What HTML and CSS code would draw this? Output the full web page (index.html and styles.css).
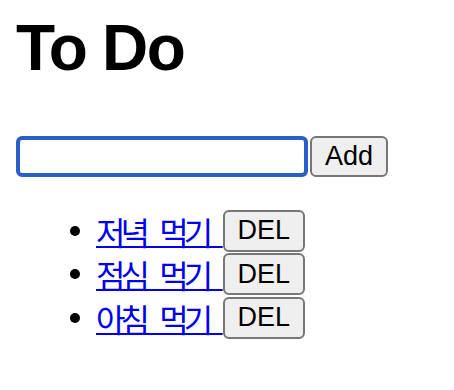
FILE: index.html
```html
<!DOCTYPE html>
<html lang="ko">
<head>
<meta charset="utf-8">
<title>To Do</title>
<link rel="stylesheet" href="styles.css">
</head>
<body>
<h1 class="title">To Do</h1>
<form class="add-form">
  <input class="add-input" type="text">
  <button class="btn btn-add" type="button">Add</button>
</form>
<ul class="todo-list">
  <li class="todo-item"><span class="dot"></span><a class="todo-link" href="#">저녁 먹기 </a><button class="btn btn-del" type="button">DEL</button></li>
  <li class="todo-item"><span class="dot"></span><a class="todo-link" href="#">점심 먹기 </a><button class="btn btn-del" type="button">DEL</button></li>
  <li class="todo-item"><span class="dot"></span><a class="todo-link" href="#">아침 먹기 </a><button class="btn btn-del" type="button">DEL</button></li>
</ul>
</body>
</html>
```
FILE: styles.css
```css
html, body {
  margin: 0;
  padding: 0;
  background: #ffffff;
}
body {
  padding: 0 16px;
  font-family: "Liberation Sans", Arial, "Noto Sans CJK KR", sans-serif;
  color: #000;
}
.title {
  margin: 11px 0 51px;
  font-size: 64px;
  font-weight: 700;
  line-height: 74px;
  height: 74px;
  letter-spacing: -1.7px;
}
.add-form {
  display: flex;
  align-items: flex-start;
  gap: 2px;
  margin: 0;
}
.add-input {
  box-sizing: border-box;
  width: 292px;
  height: 41px;
  margin: 0;
  border: 4px solid #2a5fc6;
  border-radius: 6px;
  outline: none;
  background: #fff;
  font-size: 26.67px;
}
.btn {
  box-sizing: border-box;
  margin: 0;
  padding: 0;
  background: #efefef;
  border: 2px solid #767676;
  border-radius: 6px;
  font-family: "Liberation Sans", Arial, sans-serif;
  font-size: 27px;
  color: #000;
  line-height: 1;
}
.btn-add {
  width: 78px;
  height: 41px;
}
.todo-list {
  list-style: none;
  margin: 32px 0 0;
  padding: 0 0 0 54px;
}
.todo-item {
  display: flex;
  align-items: center;
  height: 43.5px;
}
.dot {
  width: 10px;
  height: 10px;
  border-radius: 50%;
  background: #000;
  margin-right: 16px;
  flex: none;
}
.todo-link {
  font-family: "Noto Sans CJK KR", sans-serif;
  font-size: 32px;
  line-height: 40px;
  letter-spacing: -5px;
  word-spacing: 10.5px;
  color: #0000ee;
  text-decoration: underline;
  text-decoration-thickness: 2px;
  white-space: pre;
}
.btn-del {
  width: 82px;
  height: 42px;
}
```
